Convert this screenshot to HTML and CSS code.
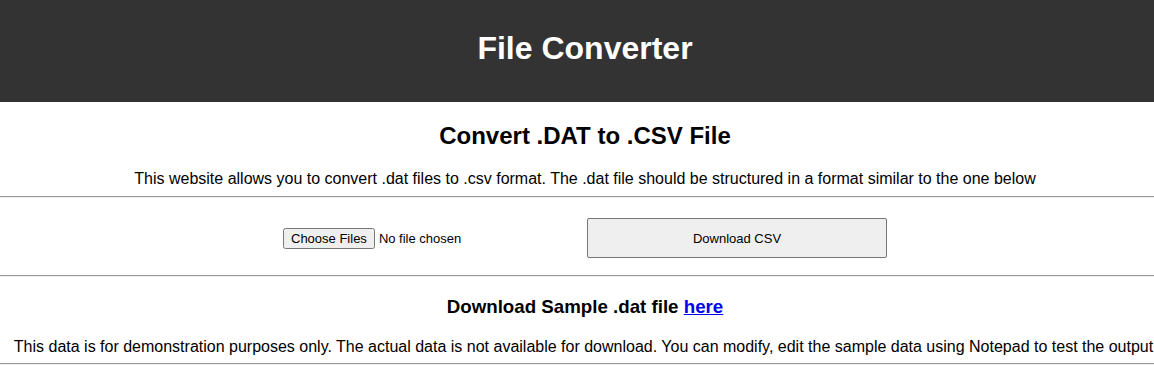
FILE: index.html
```html
<!DOCTYPE html>
<html lang="en">

<head>
    <meta charset="UTF-8">
    <meta name="viewport" content="width=device-width, initial-scale=1.0">
    <title>File Converter</title>
    <link rel="stylesheet" href="styles.css">
</head>

<body>
    <header id="header">
        <h1>File Converter</h1>
    </header>

    <div id="container">
        <div class="section">
            <h2>Convert .DAT to .CSV File</h2>
            <p>This website allows you to convert .dat files to .csv format. The .dat file should be structured in a format similar to the one below</p>
        </div>
        <hr>

        <div id="convertArea" class="section">
            <input type="file" id="fileInput" multiple>
            <button type="button" id="downloadBtn">Download CSV</button>
        </div>
        <hr>

        <div class="section">
            <h3>Download Sample .dat file <a href="#">here</a></h3>
            <p class="note">This data is for demonstration purposes only. The actual data is not available for download. You can modify, edit the sample data using Notepad to test the output</p>
        </div>
        <hr>
    </div>
</body>

</html>
```

FILE: styles.css
```css
body {
    font-family: "Liberation Sans", Arial, sans-serif;
    margin: 0;
    padding: 0;
    color: #000;
    background-color: #fff;
    overflow-x: hidden;
}

#header {
    background-color: #333;
    color: #fff;
    height: 102px;
    box-sizing: border-box;
    padding: 0 0 5px 16px;
    display: flex;
    align-items: center;
    justify-content: center;
}

#header h1 {
    margin: 0;
    font-size: 32px;
}

#container {
    text-align: center;
}

.section {
    padding-left: 16px;
}

h2 {
    font-size: 24px;
    margin: 20px 0 0;
}

p {
    font-size: 16px;
    margin: 20px 0 8px;
    white-space: nowrap;
}

hr {
    margin: 0;
    border: none;
    border-top: 1px solid #999;
    border-bottom: 1px solid #eee;
}

#convertArea {
    display: flex;
    justify-content: center;
    align-items: center;
    gap: 58px;
    padding-top: 20px;
    padding-bottom: 17px;
}

#fileInput {
    font-family: "Liberation Sans", Arial, sans-serif;
    font-size: 13px;
}

#downloadBtn {
    width: 300px;
    height: 40px;
    font-family: "Liberation Sans", Arial, sans-serif;
    font-size: 13px;
    background-color: #efefef;
    border: 1px solid #767676;
    border-radius: 2px;
}

h3 {
    font-size: 18.72px;
    margin: 19px 0 0;
}

a {
    color: #0000ee;
}

.note {
    margin: 20px 0 7px -3px;
}
```
